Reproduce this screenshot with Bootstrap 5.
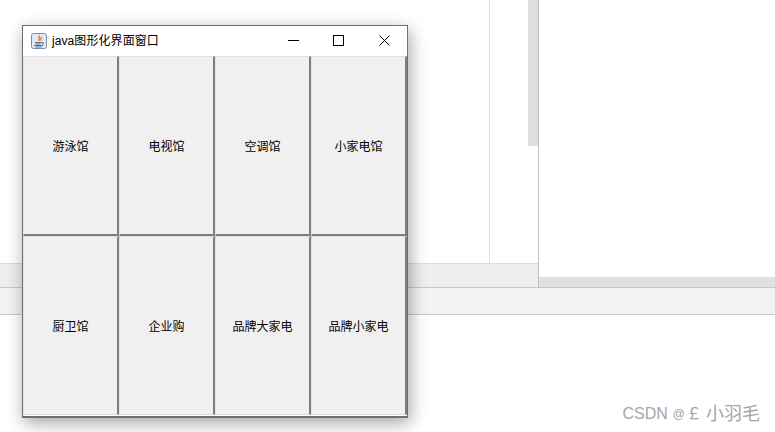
<!DOCTYPE html>
<html lang="zh">
<head>
<meta charset="utf-8">
<title>java图形化界面窗口</title>
<link href="https://cdn.jsdelivr.net/npm/bootstrap@5.3.0/dist/css/bootstrap.min.css" rel="stylesheet">
<style>
html,body{height:432px;overflow:hidden;background:#fff;font-family:"Liberation Sans","Noto Sans CJK SC",sans-serif;}
.ide{width:775px;height:432px;}
.ide-top{height:288px;}
.left-pane{width:539px;border-right:1px solid #bfbfbf;border-bottom:1px solid #c8c8c8;}
.editor{height:264px;border-bottom:1px solid #dcdcdc;}
.gutter-a{width:490px;border-right:1px solid #dedede;}
.gutter-b{width:38px;}
.vscroll{width:10px;height:146px;background:#dedede;}
.band{background:#eee;}
.strip{height:11px;background:#e0e0e0;border-bottom:1px solid #c8c8c8;}
.statusbar{height:27px;background:#f3f3f3;border-bottom:1px solid #c8c8c8;}
.jwin{position:absolute;left:22px;top:25px;width:386px;height:393px;background:#fff;border:1px solid #6f6f6f;border-bottom-width:2px;box-shadow:2px 5px 16px rgba(0,0,0,.36);}
.jtitle{height:30px;font-size:12px;color:#000;padding-left:8px;}
.jtitle .ttl{margin-left:5px;line-height:14px;letter-spacing:.08px;}
.ctl{position:absolute;top:9px;}
.ctl-min{left:265px;}
.ctl-max{left:310px;}
.ctl-close{left:356px;}
.jgrid{display:grid;grid-template-columns:repeat(4,96px);grid-template-rows:180px 179px;}
.jbtn{background:#f0f0f0;border:0;border-top:1px solid #e3e3e3;border-left:1px solid #e3e3e3;border-right:2px solid #7f7f7f;border-bottom:2px solid #7f7f7f;border-radius:0;padding:0;font-size:12px;color:#000;font-family:"Noto Sans CJK SC",sans-serif;display:flex;align-items:center;justify-content:center;}
.jbtn.last{border-bottom:1px solid #dcdcdc;}
.wm{position:absolute;right:15px;top:403px;height:22px;font-size:16px;color:#a6a6a6;font-family:"Liberation Sans","Noto Sans CJK SC",sans-serif;}
.wm .at{font-size:12px;margin:0 1px 0 5px;}
.wm .cn{font-size:18px;margin-left:4px;}
</style>
</head>
<body>
<div class="ide d-flex flex-column">
  <div class="ide-top d-flex">
    <div class="left-pane d-flex flex-column">
      <div class="editor d-flex">
        <div class="gutter-a"></div>
        <div class="gutter-b"></div>
        <div class="vscroll"></div>
      </div>
      <div class="band flex-grow-1"></div>
    </div>
    <div class="flex-grow-1 d-flex flex-column">
      <div class="flex-grow-1"></div>
      <div class="strip"></div>
    </div>
  </div>
  <div class="statusbar"></div>
</div>

<div class="jwin">
  <div class="jtitle d-flex align-items-center">
    <svg width="16" height="16" viewBox="0 0 16 16">
      <rect x=".5" y=".5" width="15" height="15" rx="2" fill="#e3e9f0" stroke="#7c8ea3"/>
      <path d="M8.500 2.500C6.500 4.500 10 5.500 7.500 8M10.500 4C9 5.200 11 6 9.500 7.500" fill="none" stroke="#e8641b" stroke-width="1.200"/>
      <path d="M4 9.500h6.500M10.500 9.500h1.500c1 0 1 1.500-1 1.800M4.500 11h5M3 12.500h9M4.500 14h6" fill="none" stroke="#4f7096" stroke-width="1"/>
    </svg>
    <span class="ttl">java图形化界面窗口</span>
    <svg class="ctl ctl-min" width="11" height="11" viewBox="0 0 11 11"><path d="M0 5.500h11" stroke="#000"/></svg>
    <svg class="ctl ctl-max" width="11" height="11" viewBox="0 0 11 11"><rect x=".5" y=".5" width="10" height="10" fill="none" stroke="#000"/></svg>
    <svg class="ctl ctl-close" width="11" height="11" viewBox="0 0 11 11"><path d="M.5.5l10 10M10.500.5l-10 10" stroke="#000" fill="none"/></svg>
  </div>
  <div class="jgrid">
    <button class="jbtn" type="button">游泳馆</button>
    <button class="jbtn" type="button">电视馆</button>
    <button class="jbtn" type="button">空调馆</button>
    <button class="jbtn" type="button">小家电馆</button>
    <button class="jbtn last" type="button">厨卫馆</button>
    <button class="jbtn last" type="button">企业购</button>
    <button class="jbtn last" type="button">品牌大家电</button>
    <button class="jbtn last" type="button">品牌小家电</button>
  </div>
</div>
<div class="wm d-flex align-items-center">CSDN<span class="at">@</span>￡<span class="cn">小羽毛</span></div>
<script src="https://cdn.jsdelivr.net/npm/bootstrap@5.3.0/dist/js/bootstrap.bundle.min.js"></script>
</body>
</html>
